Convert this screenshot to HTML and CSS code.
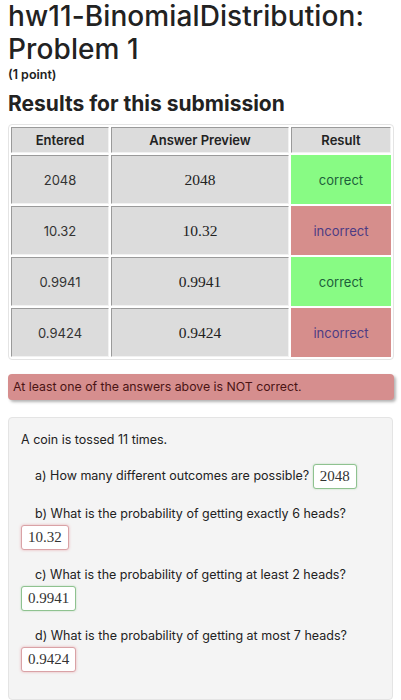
FILE: index.html
```html
<!DOCTYPE html>
<html>
<head>
<meta charset="utf-8">
<link rel="stylesheet" href="styles.css">
</head>
<body>
<h1 class="title">hw11-BinomialDistribution: Problem 1</h1>
<div class="points">(1 point)</div>
<h2 class="subtitle">Results for this submission</h2>
<table class="results">
  <thead>
    <tr><th class="c1">Entered</th><th class="c2">Answer Preview</th><th class="c3">Result</th></tr>
  </thead>
  <tbody>
    <tr><td>2048</td><td class="math">2048</td><td class="ok">correct</td></tr>
    <tr><td>10.32</td><td class="math">10.32</td><td class="bad">incorrect</td></tr>
    <tr><td>0.9941</td><td class="math">0.9941</td><td class="ok">correct</td></tr>
    <tr><td>0.9424</td><td class="math">0.9424</td><td class="bad">incorrect</td></tr>
  </tbody>
</table>
<div class="alert">At least one of the answers above is NOT correct.</div>
<div class="problem">
  <p class="para">A coin is tossed 11 times.</p>
  <p class="para"><span class="q">a) How many different outcomes are possible?</span> <span class="ans good">2048</span></p>
  <p class="para"><span class="q">b) What is the probability of getting exactly 6 heads?</span> <span class="ans wrong">10.32</span></p>
  <p class="para"><span class="q">c) What is the probability of getting at least 2 heads?</span> <span class="ans good">0.9941</span></p>
  <p class="para"><span class="q">d) What is the probability of getting at most 7 heads?</span> <span class="ans wrong">0.9424</span></p>
</div>
</body>
</html>
```
FILE: styles.css
```css
html, body {
  margin: 0;
  padding: 0;
  background: #fff;
}
body {
  padding: 0 8px;
  font-family: Inter, "Noto Sans", "Liberation Sans", sans-serif;
  color: #222;
}
.title {
  margin: 0;
  font-size: 28px;
  line-height: 33px;
  font-weight: 500;
  letter-spacing: 0.1px;
}
.points {
  margin-top: 1px;
  font-size: 12.5px;
  line-height: 16px;
  font-weight: 600;
}
.subtitle {
  margin: 8px 0 0;
  font-size: 21px;
  line-height: 25px;
  font-weight: 700;
}
.results {
  margin-top: 8px;
  width: 386px;
  border-collapse: separate;
  border-spacing: 2px;
  border: 1px solid #e4e4e4;
  border-radius: 4px;
  font-size: 13px;
  color: #333;
}
.results th, .results td {
  background: #dcdcdc;
  border-top: 1px solid #9a9a9a;
  border-left: 1px solid #9a9a9a;
  border-right: 1px solid #f2f2f2;
  border-bottom: 1px solid #f2f2f2;
  text-align: center;
  padding: 0;
}
.results th {
  height: 24px;
  font-weight: 600;
  color: #222;
}
.results td {
  height: 47px;
}
.c1 { width: 96px; }
.c2 { width: 176px; }
.results .math {
  font-family: "Liberation Serif", "DejaVu Serif", serif;
  font-size: 15.5px;
  color: #222;
}
.results .ok {
  background: #88fb84;
  color: #1d5f3a;
  border-color: #88fb84;
}
.results .bad {
  background: #d68e8c;
  color: #4d3c84;
  border-color: #d68e8c;
}
.alert {
  margin-top: 14px;
  width: 376px;
  padding: 0 5px;
  height: 26px;
  line-height: 26px;
  font-size: 12.3px;
  background: #d68e8e;
  color: #4a1414;
  border-radius: 4px;
  box-shadow: 2px 2px 3px rgba(0, 0, 0, 0.3);
}
.problem {
  margin-top: 17px;
  width: 359px;
  padding: 10px 12px 14px;
  background: #f4f4f4;
  border: 1px solid #e4e4e4;
  border-radius: 4px;
  font-size: 12.5px;
  color: #222;
}
.para {
  margin: 0 0 13px;
  line-height: 23px;
}
.q {
  margin-left: 14px;
}
.ans {
  display: inline-block;
  vertical-align: middle;
  height: 23px;
  line-height: 23px;
  padding: 0 6px;
  background: #fff;
  border-radius: 3px;
  font-family: "Liberation Serif", "DejaVu Serif", serif;
  font-size: 15px;
  color: #333;
}
.good {
  border: 1px solid #8fc290;
  box-shadow: 0 0 2px rgba(60, 160, 60, 0.35);
}
.wrong {
  border: 1px solid #d9a2a6;
  box-shadow: 0 0 3px rgba(220, 80, 90, 0.4);
}
```
